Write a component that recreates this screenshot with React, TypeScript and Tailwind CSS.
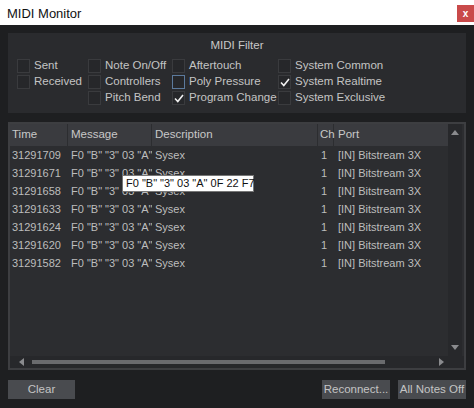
import React from "react";

const rows = [
  "31291709",
  "31291671",
  "31291658",
  "31291633",
  "31291624",
  "31291620",
  "31291582",
];

const filters: { label: string; checked?: boolean; focus?: boolean }[][] = [
  [{ label: "Sent" }, { label: "Note On/Off" }, { label: "Aftertouch" }, { label: "System Common" }],
  [{ label: "Received" }, { label: "Controllers" }, { label: "Poly Pressure", focus: true }, { label: "System Realtime", checked: true }],
  [{ label: "" }, { label: "Pitch Bend" }, { label: "Program Change", checked: true }, { label: "System Exclusive" }],
];

const Check = ({ label, checked, focus }: { label: string; checked?: boolean; focus?: boolean }) => {
  if (!label) return <div />;
  return (
    <div className="flex items-center gap-[4px] h-[16px]">
      <div
        className={
          "w-[13px] h-[14px] flex items-center justify-center border " +
          (focus ? "border-[#5c7a9c] bg-[#26272a]" : "border-[#3a3b3e] bg-[#26272a]")
        }
      >
        {checked && (
          <svg width="10" height="9" viewBox="0 0 10 9">
            <path d="M1 4.5 L3.8 7.5 L9 1" stroke="#f0f0f0" strokeWidth="1.6" fill="none" />
          </svg>
        )}
      </div>
      <span className="text-[11.5px] text-[#c4c4c4] leading-none">{label}</span>
    </div>
  );
};

export default function App() {
  return (
    <div
      className="w-[474px] h-[408px] bg-[#1e1f21] flex flex-col overflow-hidden relative"
      style={{ fontFamily: '"Liberation Sans", Arial, sans-serif' }}
    >
      {/* title bar */}
      <div className="h-[25px] bg-white flex items-start justify-between pl-[7px] shrink-0">
        <span className="text-[13px] text-[#111] mt-[4px]">MIDI Monitor</span>
        <div className="w-[17px] h-[17px] mt-[5px] bg-[#c94a4a] flex items-center justify-center text-white text-[10px] font-bold leading-none">
          x
        </div>
      </div>

      <div className="flex flex-col px-[8px] pt-[8px]">
        {/* filter panel */}
        <div className="h-[80px] bg-[#2a2b2e] flex flex-col">
          <div className="h-[23px] flex items-center justify-center text-[11.5px] text-[#c8c8c8] pt-[2px]">
            MIDI Filter
          </div>
          <div className="grid grid-cols-[71px_84px_106px_1fr] pl-[9px] pt-[2px]">
            {filters.flat().map((f, i) => (
              <Check key={i} {...f} />
            ))}
          </div>
        </div>

        {/* table */}
        <div className="mt-[9px] h-[248px] border-2 border-[#3d3e41] bg-[#2c2d30] flex flex-col">
          <div className="flex flex-1 min-h-0">
            <div className="flex-1 flex flex-col">
              <div className="h-[22px] flex bg-[#3a3b3f] text-[11.5px] text-[#c8c8c8] items-stretch">
                <div className="w-[58px] pl-[2px] flex items-center border-r border-[#2c2d30]">Time</div>
                <div className="w-[84px] pl-[3px] flex items-center border-r border-[#2c2d30]">Message</div>
                <div className="w-[166px] pl-[3px] flex items-center border-r border-[#2c2d30]">Description</div>
                <div className="w-[16px] pl-[2px] flex items-center border-r border-[#2c2d30]">Ch</div>
                <div className="flex-1 pl-[4px] flex items-center">Port</div>
              </div>
              <div className="flex flex-col">
                {rows.map((t) => (
                  <div key={t} className="h-[18px] flex items-center text-[11px] text-[#bdbdbd] whitespace-nowrap">
                    <div className="w-[58px] pl-[2px]">{t}</div>
                    <div className="w-[84px] pl-[3px] overflow-hidden">F0 "B" "3" 03 "A"</div>
                    <div className="w-[166px] pl-[3px]">Sysex</div>
                    <div className="w-[16px] pl-[3px]">1</div>
                    <div className="flex-1 pl-[4px]">[IN] Bitstream 3X</div>
                  </div>
                ))}
              </div>
            </div>
            {/* vertical scrollbar */}
            <div className="w-[14px] mr-[2px] bg-[#27282b] flex flex-col items-center justify-between py-[6px]">
              <svg width="8" height="5" viewBox="0 0 8 5">
                <path d="M0 5 L4 0 L8 5 Z" fill="#8a8b8e" />
              </svg>
              <svg width="8" height="5" viewBox="0 0 8 5">
                <path d="M0 0 L4 5 L8 0 Z" fill="#8a8b8e" />
              </svg>
            </div>
          </div>
          {/* horizontal scrollbar */}
          <div className="h-[12px] bg-[#27282b] flex items-center pl-[9px] pr-[20px] shrink-0">
            <svg width="5" height="8" viewBox="0 0 5 8">
              <path d="M5 0 L0 4 L5 8 Z" fill="#8a8b8e" />
            </svg>
            <div className="ml-[8px] w-[353px] h-[4px] bg-[#6a6b6e]" />
            <div className="flex-1" />
            <svg width="5" height="8" viewBox="0 0 5 8">
              <path d="M0 0 L5 4 L0 8 Z" fill="#8a8b8e" />
            </svg>
          </div>
        </div>

        {/* buttons */}
        <div className="mt-[10px] flex items-center text-[11.5px] text-[#c4c4c4]">
          <button className="w-[67px] h-[19px] bg-[#494b4f] flex items-center justify-center">Clear</button>
          <div className="flex-1" />
          <button className="w-[68px] h-[19px] bg-[#494b4f] flex items-center justify-center">Reconnect...</button>
          <button className="ml-[8px] w-[68px] h-[19px] bg-[#494b4f] flex items-center justify-center whitespace-nowrap">
            All Notes Off
          </button>
        </div>
      </div>

      {/* tooltip */}
      <div className="absolute left-[122px] top-[175px] w-[132px] h-[17px] bg-white border border-[#767676] text-[11px] text-[#111] flex items-center pl-[3px] whitespace-nowrap">
        F0 "B" "3" 03 "A" 0F 22 F7
      </div>
    </div>
  );
}
